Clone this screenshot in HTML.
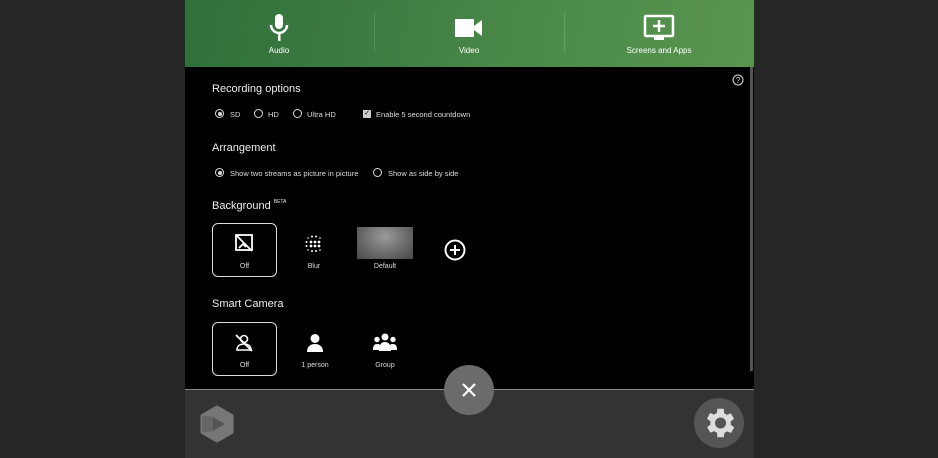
<!DOCTYPE html>
<html><head><meta charset="utf-8"><style>
*{margin:0;padding:0;box-sizing:border-box}
body{width:938px;height:458px;background:#262626;position:relative;overflow:hidden;font-family:"Liberation Sans",sans-serif;color:#fff}
.abs{position:absolute}
.hdr{left:185px;top:0;width:569px;height:67px;background:linear-gradient(100deg,#2f6f3a 0%,#3f7d42 35%,#4a8a48 60%,#5a9550 100%)}
.sep{top:12px;width:1px;height:40px;background:rgba(255,255,255,0.15)}
.lbl{font-size:8px;text-align:center;width:120px}
.panel{left:185px;top:67px;width:569px;height:322px;background:#000}
.sb{left:750px;top:67px;width:3px;height:304px;background:#555}
.h{font-size:11px;color:#eee}
.s{font-size:7.5px;color:#ddd}
.radio{width:9px;height:9px;border:1px solid #ddd;border-radius:50%}
.radio.on::after{content:"";position:absolute;left:1.5px;top:1.5px;width:4px;height:4px;border-radius:50%;background:#ddd}
.box{border:1.5px solid #ddd;border-radius:6px;width:65px;height:54px}
.bot{left:185px;top:389px;width:569px;height:69px;background:#333;border-top:1px solid #888}
</style></head><body>
<div class="abs hdr"></div>
<div class="abs sep" style="left:374px"></div>
<div class="abs sep" style="left:564px"></div>
<svg class="abs" style="left:268px;top:13px" width="22" height="30" viewBox="0 0 22 30"><rect x="7" y="1" width="8" height="15" rx="4" fill="#fff"/><path d="M3 12a8 8 0 0 0 16 0" stroke="#fff" stroke-width="2.5" fill="none"/><rect x="10" y="20" width="2.5" height="8" fill="#fff"/></svg>
<div class="abs lbl" style="left:219px;top:46px">Audio</div>
<svg class="abs" style="left:455px;top:18px" width="28" height="20" viewBox="0 0 28 20"><rect x="0" y="1" width="19" height="18" fill="#fff"/><path d="M19 8l8-6v16l-8-6z" fill="#fff"/></svg>
<div class="abs lbl" style="left:409px;top:46px">Video</div>
<svg class="abs" style="left:643px;top:14px" width="32" height="28" viewBox="0 0 32 28"><rect x="2" y="2" width="28" height="20" rx="1" stroke="#fff" stroke-width="2.5" fill="none"/><path d="M16 6v12M10 12h12" stroke="#fff" stroke-width="2.5"/><rect x="11" y="23" width="10" height="3" fill="#fff"/></svg>
<div class="abs lbl" style="left:599px;top:46px">Screens and Apps</div>

<div class="abs panel"></div>
<div class="abs sb"></div>
<svg class="abs" style="left:732px;top:74px" width="12" height="12" viewBox="0 0 12 12"><circle cx="6" cy="6" r="5" stroke="#ddd" fill="none"/><text x="6" y="9" font-size="8" fill="#ddd" text-anchor="middle" font-family="Liberation Sans">?</text></svg>

<div class="abs h" style="left:212px;top:83px">Recording options</div>
<div class="abs radio on" style="left:215px;top:109px"></div><div class="abs s" style="left:230px;top:110px">SD</div>
<div class="abs radio" style="left:254px;top:109px"></div><div class="abs s" style="left:268px;top:110px">HD</div>
<div class="abs radio" style="left:293px;top:109px"></div><div class="abs s" style="left:307px;top:110px">Ultra HD</div>
<div class="abs" style="left:363px;top:110px;width:8px;height:8px;background:#ccc;color:#000;font-size:7px;line-height:8px;text-align:center">✓</div>
<div class="abs s" style="left:376px;top:110px">Enable 5 second countdown</div>

<div class="abs h" style="left:212px;top:142px">Arrangement</div>
<div class="abs radio on" style="left:215px;top:168px"></div><div class="abs s" style="left:230px;top:169px">Show two streams as picture in picture</div>
<div class="abs radio" style="left:373px;top:168px"></div><div class="abs s" style="left:388px;top:169px">Show as side by side</div>

<div class="abs h" style="left:212px;top:199px">Background <sup style="font-size:5px;vertical-align:6px">BETA</sup></div>
<div class="abs box" style="left:212px;top:223px"></div>
<svg class="abs" style="left:234px;top:233px" width="20" height="20" viewBox="0 0 20 20"><rect x="2" y="2" width="16" height="15" stroke="#fff" stroke-width="1.8" fill="none"/><path d="M2 2l16 16M5 15l4-4 3 3" stroke="#fff" stroke-width="1.8" fill="none"/></svg>
<div class="abs s" style="left:212px;top:263px;width:65px;text-align:center;font-size:7px">Off</div>
<svg class="abs" style="left:304px;top:234px" width="20" height="20" viewBox="0 0 20 20" fill="#fff"><g><circle cx="4" cy="4" r=".8"/><circle cx="8" cy="2.5" r="1"/><circle cx="12" cy="2.5" r="1"/><circle cx="16" cy="4" r=".8"/><circle cx="2.5" cy="8" r="1"/><circle cx="7" cy="8" r="1.4"/><circle cx="11" cy="8" r="1.4"/><circle cx="15" cy="8" r="1.4"/><circle cx="2.5" cy="12" r="1"/><circle cx="7" cy="12" r="1.4"/><circle cx="11" cy="12" r="1.4"/><circle cx="15" cy="12" r="1.4"/><circle cx="4" cy="16" r=".8"/><circle cx="8" cy="17" r="1"/><circle cx="12" cy="17" r="1"/><circle cx="16" cy="16" r=".8"/></g></svg>
<div class="abs s" style="left:284px;top:263px;width:60px;text-align:center;font-size:7px">Blur</div>
<div class="abs" style="left:357px;top:227px;width:56px;height:32px;background:radial-gradient(ellipse at 50% 30%,#9a9a9a,#5e5e5e 70%,#4a4a4a)"></div>
<div class="abs s" style="left:355px;top:263px;width:60px;text-align:center;font-size:7px">Default</div>
<svg class="abs" style="left:444px;top:239px" width="22" height="22" viewBox="0 0 22 22"><circle cx="11" cy="11" r="9.5" stroke="#fff" stroke-width="2" fill="none"/><path d="M11 6v10M6 11h10" stroke="#fff" stroke-width="2"/></svg>

<div class="abs h" style="left:212px;top:298px">Smart Camera</div>
<div class="abs box" style="left:212px;top:322px"></div>
<svg class="abs" style="left:234px;top:333px" width="20" height="20" viewBox="0 0 20 20"><circle cx="10" cy="6" r="3.5" stroke="#fff" stroke-width="1.6" fill="none"/><path d="M3 17c0-4 3-6 7-6s7 2 7 6z" stroke="#fff" stroke-width="1.6" fill="none"/><path d="M2 2l16 16" stroke="#fff" stroke-width="1.8"/></svg>
<div class="abs s" style="left:212px;top:362px;width:65px;text-align:center;font-size:7px">Off</div>
<svg class="abs" style="left:305px;top:333px" width="20" height="20" viewBox="0 0 20 20" fill="#fff"><circle cx="10" cy="5.5" r="4.5"/><path d="M2 19c0-5 3-8 8-8s8 3 8 8z"/></svg>
<div class="abs s" style="left:285px;top:362px;width:60px;text-align:center;font-size:7px">1 person</div>
<svg class="abs" style="left:372px;top:333px" width="26" height="20" viewBox="0 0 26 20" fill="#fff"><circle cx="13" cy="4" r="3.5"/><circle cx="5" cy="6.5" r="2.7"/><circle cx="21" cy="6.5" r="2.7"/><path d="M7 18c0-6 2-9 6-9s6 3 6 9z"/><path d="M1 17c0-4 1-6 4-6s3 1 3 2l-1 4z"/><path d="M25 17c0-4-1-6-4-6s-3 1-3 2l1 4z"/></svg>
<div class="abs s" style="left:355px;top:362px;width:60px;text-align:center;font-size:7px">Group</div>

<div class="abs bot"></div>
<div class="abs" style="left:444px;top:365px;width:50px;height:50px;border-radius:50%;background:#6b6b6b"></div>
<svg class="abs" style="left:460px;top:381px" width="18" height="18" viewBox="0 0 18 18"><path d="M3 3l12 12M15 3L3 15" stroke="#fff" stroke-width="2.2"/></svg>
<svg class="abs" style="left:199px;top:405px" width="36" height="38" viewBox="0 0 36 38"><path d="M18 2l15 8.5v17L18 36 3 27.5v-17z" fill="#777" stroke="#777" stroke-width="3" stroke-linejoin="round"/><path d="M14 12l12 7-12 7z" fill="#555"/><path d="M3 10.5L14 12v14L3 27.5z" fill="#666"/></svg>
<div class="abs" style="left:694px;top:398px;width:50px;height:50px;border-radius:50%;background:#555"></div>
<svg class="abs" style="left:700px;top:404px" width="38" height="38" viewBox="0 0 24 24"><path fill="#ddd" d="M19.4 13a7.5 7.5 0 0 0 0-2l2.1-1.6-2-3.5-2.5 1a7 7 0 0 0-1.7-1L15 3h-4l-.4 2.7a7 7 0 0 0-1.7 1l-2.5-1-2 3.5L6.6 11a7.5 7.5 0 0 0 0 2l-2.1 1.6 2 3.5 2.5-1a7 7 0 0 0 1.7 1L11 21h4l.4-2.7a7 7 0 0 0 1.7-1l2.5 1 2-3.5zM13 15.5a3.5 3.5 0 1 1 0-7 3.5 3.5 0 0 1 0 7z"/></svg>
</body></html>
